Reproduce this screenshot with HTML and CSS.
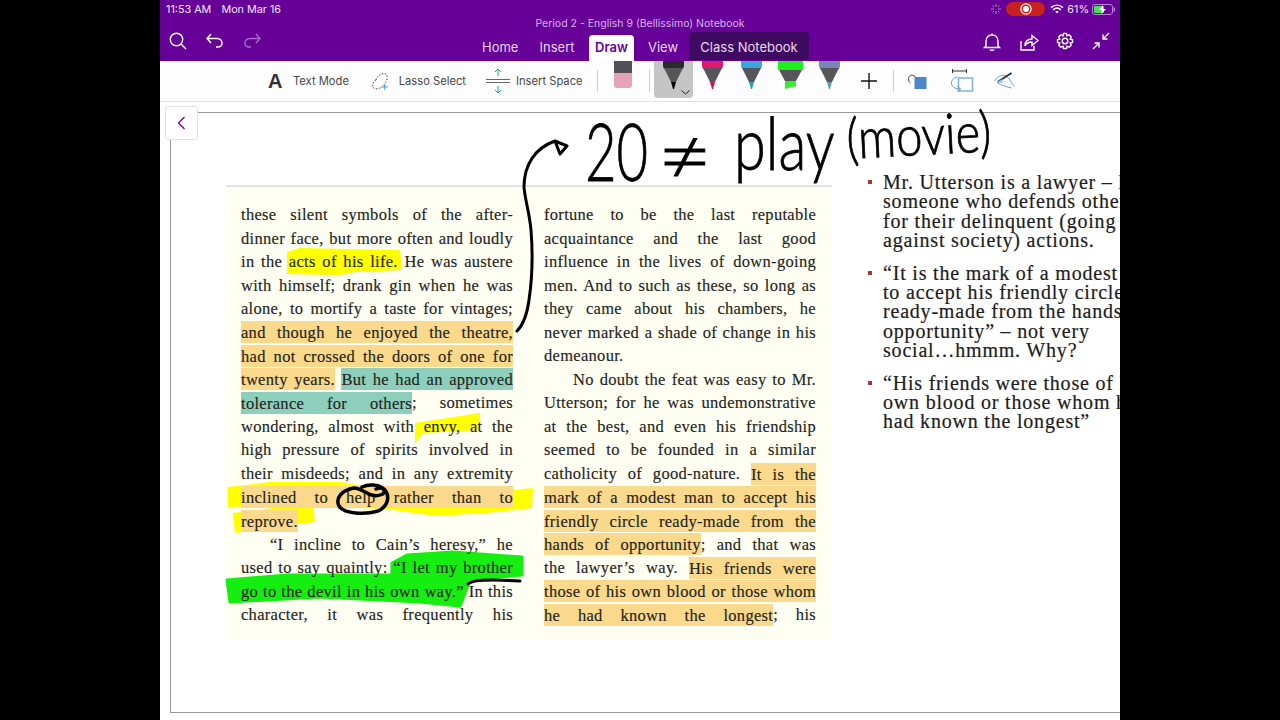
FILE: index.html
```html
<!DOCTYPE html>
<html lang="en">
<head>
    <meta charset="UTF-8">
    <title>Period 2 - English 9 (Bellissimo) Notebook</title>
    <link rel="stylesheet" href="styles.css">
</head>
<body>
    <svg class="defs" width="0" height="0">
        <symbol id="pen" viewBox="0 0 21 28">
            <path fill="var(--tint)" d="M0 0H21V5L20 8H1L0 5Z"/>
            <path fill="#56565a" d="M1 7H20L13 21H8Z"/>
            <path fill="var(--tip)" d="M8 21H13L11 28H10Z"/>
        </symbol>
    </svg>
    <div class="screen">
        <header class="topbar">
            <div class="status">
                <span class="clock">11:53 AM</span>
                <span>Mon Mar 16</span>
                <span class="status-right">
                    <svg class="spinner" width="10" height="10" viewBox="0 0 10 10"><path d="M5 0V3M5 7V10M0 5H3M7 5H10M1.5 1.5L3 3M7 7L8.5 8.5M1.5 8.5L3 7M7 3L8.5 1.5"/></svg>
                    <span class="rec"><i></i></span>
                    <svg class="wifi" width="14" height="10" viewBox="0 0 14 10"><path d="M1 3.6C4.6 .5 9.4 .5 13 3.6M3.1 5.8C5.4 3.8 8.6 3.8 10.9 5.8"/><path class="wifi-dot" d="M5.2 7.6C6.3 6.8 7.7 6.8 8.8 7.6L7 9.6Z"/></svg>
                    <span>61%</span>
                    <svg width="23" height="11" viewBox="0 0 23 11"><rect x=".5" y=".5" width="20" height="10" rx="2.5" fill="none" stroke="#b58ad0"/><rect x="2" y="2" width="10" height="7" rx="1" fill="#4cd964"/><path fill="#fff" d="M11 1L7 6H10L9 10L14 5H11Z"/><rect x="21.5" y="3.5" width="1.5" height="4" fill="#b58ad0"/></svg>
                </span>
            </div>
            <div class="doc-title">Period 2 - English 9 (Bellissimo) Notebook</div>
            <div class="tabrow">
                <div class="quick">
                    <svg width="20" height="20" viewBox="0 0 20 20"><circle cx="8.5" cy="8.5" r="6.2"/><path d="M13 13L18 18"/></svg>
                    <svg width="20" height="20" viewBox="0 0 20 20"><path d="M6 3L2 7.5L6 12M2 7.5H12C15 7.5 17 9.5 17 12C17 14.5 15 16 12.5 16H11"/></svg>
                    <svg class="faded" width="20" height="20" viewBox="0 0 20 20"><path d="M14 3L18 7.5L14 12M18 7.5H8C5 7.5 3 9.5 3 12C3 14.5 5 16 7.5 16H9"/></svg>
                </div>
                <nav class="tabs">
                    <span class="tab tab-home">Home</span>
                    <span class="tab tab-insert">Insert</span>
                    <span class="tab tab-active">Draw</span>
                    <span class="tab tab-view">View</span>
                    <span class="tab tab-class">Class Notebook</span>
                </nav>
                <div class="actions">
                    <svg width="18" height="20" viewBox="0 0 18 20"><path d="M3 14V9C3 5.5 5.5 3 9 3C12.5 3 15 5.5 15 9V14L16.5 15.5H1.5ZM7 17.5C7.5 18.7 10.5 18.7 11 17.5M9 1.5V3"/></svg>
                    <svg width="20" height="20" viewBox="0 0 20 20"><path d="M2 9V18H15V14M6 14C6 9 9 7 13 7V3.5L19 8.5L13 13.5V10C10 10 7.500 11 6 14Z"/></svg>
                    <svg width="18" height="18" viewBox="0 0 18 18"><path d="M7.500 1.500H10.500L11 3.800L13.200 2.900L15.200 5L14.200 7.100L16.500 7.800V10.500L14.200 11L15.200 13.200L13.200 15.200L11 14.200L10.500 16.500H7.500L7 14.200L4.800 15.200L2.800 13.200L3.800 11L1.500 10.500V7.800L3.800 7.100L2.800 5L4.800 2.900L7 3.800Z"/><circle cx="9" cy="9" r="2.800"/></svg>
                    <svg width="18" height="18" viewBox="0 0 18 18"><path d="M17 1L11 7M11 2.500V7H15.500M1 17L7 11M2.500 11H7V15.500"/></svg>
                </div>
            </div>
        </header>

        <div class="toolbar">
            <div class="tool tool-text"><span class="big-a">A</span>Text Mode</div>
            <div class="tool tool-lasso">
                <svg width="19" height="20" viewBox="0 0 19 20"><path class="dash" d="M5 9C6 5 11 1 15 3C18 5 16 9 15 11C13 15 9 18 5 18C1 18 0 12 5 9Z"/><path class="plus-blue" d="M14 13V19M11 16H17"/></svg>
                Lasso Select
            </div>
            <div class="tool tool-space">
                <svg width="24" height="26" viewBox="0 0 24 26"><path class="lines" d="M0 11.500H24M0 14.500H24"/><path class="teal" d="M12 1V8M9 4L12 1L15 4M12 18V25M9 22L12 25L15 22"/></svg>
                Insert Space
            </div>
            <span class="divider divider-a"></span>
            <div class="eraser"></div>
            <span class="divider divider-b"></span>
            <div class="pens">
                <div class="pen-slot pen-selected pen-black">
                    <svg class="pen" width="21" height="28"><use href="#pen"/></svg>
                    <svg class="chev" width="9" height="5" viewBox="0 0 9 5"><path d="M.5 .5L4.500 4L8.500 .5"/></svg>
                </div>
                <div class="pen-slot pen-pink"><svg class="pen" width="21" height="28"><use href="#pen"/></svg></div>
                <div class="pen-slot pen-blue"><svg class="pen" width="21" height="28"><use href="#pen"/></svg></div>
                <div class="pen-slot">
                    <svg class="pen" width="25" height="28" viewBox="0 0 25 28"><path fill="#1fee1f" d="M0 0H25V9H0Z"/><path fill="#56565a" d="M1 9H24L18 20H7Z"/><path fill="#30f030" d="M7 20H18V25L7 28Z"/></svg>
                </div>
                <div class="pen-slot pen-galaxy"><svg class="pen" width="21" height="28"><use href="#pen"/></svg></div>
                <div class="pen-slot plus-slot">
                    <svg width="18" height="18" viewBox="0 0 18 18"><path d="M9 1V17M1 9H17"/></svg>
                </div>
            </div>
            <span class="divider"></span>
            <div class="ink-tools">
                <svg width="22" height="20" viewBox="0 0 22 20"><path d="M8 6C3 1 -2 8 3 12" fill="none" stroke="#444" stroke-width="1"/><rect x="7" y="6" width="12" height="12" fill="#4a86c8"/></svg>
                <svg width="24" height="26" viewBox="0 0 24 26"><path d="M3 1V5M17 1V5M3 3H17" fill="none" stroke="#333"/><rect x="9" y="10" width="14" height="13" fill="#fff" stroke="#7fb2da" stroke-width="1.500"/><path d="M8 9C2 10 0 16 4 19C6 21 9 21 11 21M8 18L11 21L8 24" fill="none" stroke="#6b9bc5"/></svg>
                <svg width="22" height="20" viewBox="0 0 22 20"><path d="M1 10C5 4 11 3 14 6C18 10 18 14 21 15M4 12C8 14 13 16 18 17" fill="none" stroke="#6aa2cc"/><path d="M4 11L18 2" stroke="#2c3440" stroke-width="2"/><path d="M3 11L9 8L9 12Z" fill="#8fc0e0"/></svg>
            </div>
        </div>

        <main class="canvas">
            <div class="page-frame"></div>
            <div class="back-btn">
                <svg width="9" height="14" viewBox="0 0 9 14"><path d="M7.500 1L1.500 7L7.500 13"/></svg>
            </div>

            <section class="book">
                <svg class="marker" width="960" height="618" viewBox="160 102 960 618">
                    <path d="M287 252L300 248L345 249L400 250L402 270L355 272L340 275L287 274Z"/>
                    <path d="M415 423L480 413L480 430L423 433L415 444Z"/>
                    <path d="M228 487L270 482L340 482L365 486L513 490L533 488L532 508L487 513L436 516L393 510L313 505L228 507Z"/>
                    <path d="M233 513L313 503L315 522L300 524L235 533Z"/>
                    <path class="marker-green" d="M392 563L407 555L453 552L522 557L522 575L470 580L460 606L420 602L320 597L230 602L227 580L287 575L392 575Z"/>
                </svg>
                <div class="book-col">
                    <div class="line">these silent symbols of the after-</div>
                    <div class="line">dinner face, but more often and loudly</div>
                    <div class="line">in the acts of his life. He was austere</div>
                    <div class="line">with himself; drank gin when he was</div>
                    <div class="line">alone, to mortify a taste for vintages;</div>
                    <div class="line"><span class="hl-o">and though he enjoyed the theatre,</span></div>
                    <div class="line"><span class="hl-o">had not crossed the doors of one for</span></div>
                    <div class="line"><span class="hl-o">twenty years.</span> <span class="hl-t">But he had an approved</span></div>
                    <div class="line"><span class="hl-t">tolerance for others</span>; sometimes</div>
                    <div class="line">wondering, almost with envy, at the</div>
                    <div class="line">high pressure of spirits involved in</div>
                    <div class="line">their misdeeds; and in any extremity</div>
                    <div class="line"><span class="hl-o">inclined to help rather than to</span></div>
                    <div class="line last"><span class="hl-o">reprove.</span></div>
                    <div class="line indent">“I incline to Cain’s heresy,” he</div>
                    <div class="line">used to say quaintly: “I let my brother</div>
                    <div class="line">go to the devil in his own way.” In this</div>
                    <div class="line">character, it was frequently his</div>
                </div>
                <div class="book-col">
                    <div class="line">fortune to be the last reputable</div>
                    <div class="line">acquaintance and the last good</div>
                    <div class="line">influence in the lives of down-going</div>
                    <div class="line">men. And to such as these, so long as</div>
                    <div class="line">they came about his chambers, he</div>
                    <div class="line">never marked a shade of change in his</div>
                    <div class="line last">demeanour.</div>
                    <div class="line indent">No doubt the feat was easy to Mr.</div>
                    <div class="line">Utterson; for he was undemonstrative</div>
                    <div class="line">at the best, and even his friendship</div>
                    <div class="line">seemed to be founded in a similar</div>
                    <div class="line">catholicity of good-nature. <span class="hl-o">It is the</span></div>
                    <div class="line"><span class="hl-o">mark of a modest man to accept his</span></div>
                    <div class="line"><span class="hl-o">friendly circle ready-made from the</span></div>
                    <div class="line"><span class="hl-o">hands of opportunity</span>; and that was</div>
                    <div class="line">the lawyer’s way. <span class="hl-o">His friends were</span></div>
                    <div class="line"><span class="hl-o">those of his own blood or those whom</span></div>
                    <div class="line"><span class="hl-o">he had known the longest</span>; his</div>
                </div>
            </section>

            <ul class="slide">
                <li>Mr. Utterson is a lawyer – he is<br>someone who defends others<br>for their delinquent (going<br>against society) actions.</li>
                <li>“It is the mark of a modest man<br>to accept his friendly circle<br>ready-made from the hands of<br>opportunity” – not very<br>social…hmmm. Why?</li>
                <li>“His friends were those of his<br>own blood or those whom he<br>had known the longest”</li>
            </ul>

            <svg class="pen-ink" width="960" height="618" viewBox="160 102 960 618">
                <path d="M517 331C523 325 527 315 529 300C532 280 533 255 531 230C529 210 525 200 524 187C524 165 535 148 555 141L567 146L560 154L555 141"/>
                <path class="heavy" d="M376 489C383 486 386 490 383 494C370 500 364 488 354 488C342 490 335 498 339 506C344 514 365 515 378 511C389 506 390 495 384 489C378 484 368 484 362 487"/>
                <path d="M468 584C472 580 485 579 520 581"/>
            </svg>

            <div class="ink-note">
                <span class="ink-20">20</span>
                <span class="ink-ne">≠</span>
                <span class="ink-play">play</span>
                <span class="ink-movie">(movie)</span>
            </div>
        </main>
    </div>
</body>
</html>
```

FILE: styles.css
```css
* {
    box-sizing: border-box;
}
body {
    margin: 0;
    background-color: #000;
    font-family: 'Inter', 'Liberation Sans', sans-serif;
}
.defs {
    position: absolute;
}
.screen {
    width: 960px;
    height: 720px;
    margin: 0 auto;
    display: flex;
    flex-direction: column;
    overflow: hidden;
    background-color: #fff;
}

/* purple header */
.topbar {
    height: 61px;
    flex: none;
    background-color: #660099;
    color: #fff;
}
.status {
    height: 16px;
    padding: 2px 5px 0 6px;
    display: flex;
    align-items: center;
    gap: 10px;
    font-size: 10.8px;
    color: #f0e4f6;
}
.status-right {
    margin-left: auto;
    display: flex;
    align-items: center;
    gap: 3px;
}
.spinner {
    margin-right: 2px;
    fill: none;
    stroke: #a884c0;
}
.rec {
    width: 39px;
    height: 14px;
    border-radius: 7px;
    background-color: #c8201e;
    display: flex;
    align-items: center;
    justify-content: center;
    margin-right: 2px;
}
.rec i {
    width: 6px;
    height: 6px;
    border-radius: 50%;
    background-color: #fff;
    box-shadow: 0 0 0 1.5px #c8201e, 0 0 0 2.7px #fff;
}
.wifi {
    fill: none;
    stroke: #fff;
    stroke-width: 1.6;
}
.wifi-dot {
    fill: #fff;
    stroke: none;
}
.doc-title {
    height: 16px;
    line-height: 16px;
    text-align: center;
    font-size: 10.5px;
    color: #d6b4e6;
}
.tabrow {
    height: 29px;
    display: flex;
    position: relative;
}
.tabrow svg {
    fill: none;
    stroke: #fff;
    stroke-width: 1.4;
}
.quick {
    width: 322px;
    padding: 0 0 0 8px;
    display: flex;
    gap: 17px;
}
.quick svg {
    margin-top: -1px;
}
.tabrow .faded {
    stroke: #a26cc4;
}
.tabs {
    display: flex;
    font-size: 13px;
    color: #e8d8f0;
}
.tab {
    height: 29px;
    line-height: 30px;
    text-align: center;
}
.tab-home {
    width: 36px;
}
.tab-insert {
    width: 36px;
    margin-left: 21px;
}
.tab-active {
    width: 45px;
    height: 26px;
    margin: 3px 0 0 14px;
    line-height: 25px;
    background-color: #fff;
    color: #660099;
    font-weight: 600;
    border-radius: 4px 4px 0 0;
}
.tab-view {
    width: 30px;
    margin-left: 14px;
}
.tab-class {
    width: 120px;
    height: 28px;
    margin-left: 11px;
    background-color: #3f0a62;
    border-radius: 4px 4px 0 0;
}
.actions {
    margin-left: auto;
    width: 137px;
    padding-right: 10px;
    display: flex;
    justify-content: space-between;
}

/* draw toolbar */
.toolbar {
    height: 41px;
    flex: none;
    padding-left: 108px;
    display: flex;
    align-items: center;
    background-color: #fdfdfd;
    border-bottom: 1px solid #e2e2e2;
    font-size: 11.2px;
    color: #474747;
}
.tool {
    display: flex;
    align-items: center;
    white-space: nowrap;
    height: 100%;
}
.big-a {
    width: 14px;
    margin-right: 11px;
    font: bold 20px 'Liberation Sans', sans-serif;
    color: #333;
}
.tool-text {
    width: 80px;
}
.tool-lasso {
    width: 95px;
    margin-left: 23px;
    gap: 9px;
}
.tool-space {
    width: 98px;
    margin-left: 20px;
    gap: 6px;
}
.dash {
    fill: none;
    stroke: #444;
    stroke-dasharray: 1.5 1.5;
}
.plus-blue {
    fill: none;
    stroke: #3b93d6;
}
.lines {
    fill: none;
    stroke: #666;
}
.teal {
    fill: none;
    stroke: #2d9c85;
}
.divider {
    width: 1px;
    height: 22px;
    margin-left: 4px;
    background-color: #ccc;
}
.divider-a {
    margin-left: 13px;
}
.divider-b {
    margin-left: 17px;
}
.eraser {
    width: 18px;
    height: 27px;
    margin-left: 16px;
    align-self: flex-start;
    border-radius: 0 0 3px 3px;
    background: linear-gradient(#515155 12px, #e5a3b8 12px);
}
.pens {
    display: flex;
    height: 100%;
    margin-left: 4px;
}
.pen-slot {
    width: 39px;
    height: 37px;
    position: relative;
    display: flex;
    justify-content: center;
}
.pen-selected {
    background-color: #c5c5c5;
    border-radius: 0 0 4px 4px;
}
.pen-black {
    --tint: #2b2b2d;
    --tip: #000;
}
.pen-pink {
    --tint: #e0186e;
    --tip: #d01050;
}
.pen-blue {
    --tint: #3aa6dc;
    --tip: #1e9cc4;
}
.pen-galaxy {
    --tint: #7a86b8;
    --tip: #5a9ca8;
}
.chev {
    position: absolute;
    right: 3px;
    bottom: 3px;
    fill: none;
    stroke: #222;
}
.plus-slot {
    align-items: center;
    height: 100%;
    width: 40px;
}
.plus-slot svg {
    fill: none;
    stroke: #111;
    stroke-width: 1.4;
}
.ink-tools {
    display: flex;
    align-items: center;
    margin-left: 3px;
}
.ink-tools svg {
    width: 43px;
}

/* note canvas */
.canvas {
    flex: 1;
    position: relative;
    overflow: hidden;
    background-color: #fff;
}
.page-frame {
    position: absolute;
    left: 10px;
    top: 10px;
    right: -4px;
    bottom: 7px;
    border: 1.5px solid #9a9a9a;
}
.back-btn {
    position: absolute;
    left: 5px;
    top: 4px;
    width: 33px;
    height: 34px;
    background-color: #fff;
    border: 1px solid #e2e2e2;
    border-radius: 3px;
    display: flex;
    align-items: center;
    justify-content: center;
}
.back-btn svg {
    fill: none;
    stroke: #660099;
    stroke-width: 1.3;
}
.book {
    position: absolute;
    left: 66px;
    top: 83px;
    width: 606px;
    height: 455px;
    padding: 16px 0 0 15px;
    display: grid;
    grid-template-columns: 272px 272px;
    column-gap: 31px;
    background-color: #fffef3;
    border-top: 2px solid #e2e2e2;
    font-family: 'Liberation Serif', serif;
    font-size: 16.5px;
    letter-spacing: .3px;
    word-spacing: -1px;
    color: #241f1b;
    -webkit-text-stroke: .15px #241f1b;
}
.book-col {
    position: relative;
}
.line {
    height: 23.55px;
    line-height: 23.55px;
    white-space: nowrap;
    text-align: justify;
    text-align-last: justify;
}
.line.last {
    text-align-last: left;
}
.line.indent {
    padding-left: 29px;
}
.hl-o {
    background-color: #fad88c;
    padding: 1.5px 0;
}
.hl-t {
    background-color: #8dcfbc;
    padding: 1.5px 0;
}
.slide {
    position: absolute;
    left: 723px;
    top: 71px;
    width: 300px;
    margin: 0;
    padding: 0;
    list-style: none;
    font-family: 'Liberation Serif', serif;
    font-size: 20px;
    line-height: 19.3px;
    letter-spacing: .8px;
    white-space: nowrap;
    color: #1c1c1c;
    -webkit-text-stroke: .2px #1c1c1c;
}
.slide li {
    position: relative;
    margin-bottom: 13.5px;
}
.slide li::before {
    content: "";
    position: absolute;
    left: -15px;
    top: 7px;
    width: 4px;
    height: 4px;
    background-color: #a33a2e;
}
.marker {
    position: absolute;
    left: -66px;
    top: -85px;
    fill: #ffff00;
}
.marker .marker-green {
    fill: #16ee12;
    stroke: #16ee12;
    stroke-width: 3;
    stroke-linejoin: round;
}
.pen-ink {
    position: absolute;
    left: 0;
    top: 0;
    fill: none;
    stroke: #000;
    stroke-width: 3;
    stroke-linecap: round;
    stroke-linejoin: round;
}
.pen-ink .heavy {
    stroke-width: 3.5;
}

/* the handwritten note, kept as text */
.ink-note span {
    position: absolute;
    font-family: 'Lato', sans-serif;
    font-weight: 300;
    line-height: 1;
    color: #000;
    white-space: nowrap;
    transform-origin: left top;
    -webkit-text-stroke: .8px #000;
}
.ink-20 {
    left: 425px;
    top: 8px;
    font-size: 80px;
    transform: scaleX(.68);
}
.ink-ne {
    left: 497px;
    top: 12px;
    font-size: 80px;
    transform: scaleX(1.2);
}
.ink-play {
    left: 574px;
    top: 4px;
    font-size: 72px;
    transform: scaleX(.8);
}
.ink-movie {
    left: 685px;
    top: 8px;
    font-size: 56px;
    transform: rotate(-3deg) scaleX(.84);
}
```
